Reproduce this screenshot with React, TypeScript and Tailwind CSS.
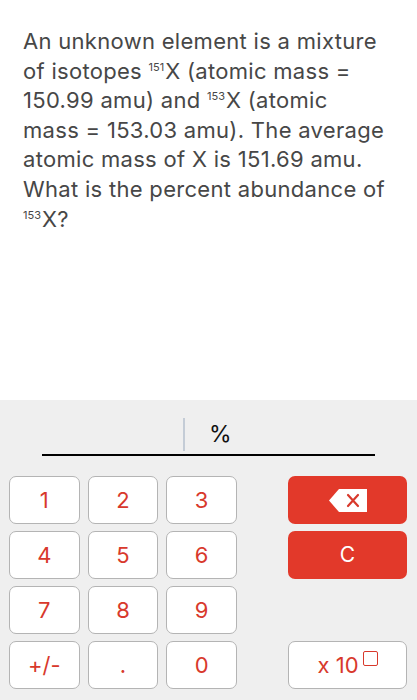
import React from 'react';

const Key = ({ label, className = '' }: { label: React.ReactNode; className?: string }) => (
  <div
    className={`flex h-[48px] items-center justify-center rounded-[7px] border-[1.5px] border-[#b4b4b4] bg-white text-[22px] text-[#d8392c] ${className}`}
  >
    {label}
  </div>
);

const Iso = ({ n }: { n: string }) => (
  <span className="relative top-[-8px] mr-[1px] text-[11px] leading-none tracking-normal">{n}</span>
);

export default function App() {
  return (
    <div className="flex h-[700px] w-[417px] flex-col bg-white" style={{ fontFamily: 'Inter, "Noto Sans", sans-serif' }}>
      {/* Question */}
      <div className="h-[400px] px-[23px] pt-[27px]">
        <p className="whitespace-nowrap text-[22px] leading-[29.6px] tracking-[0.3px] text-[#474747]">
          An unknown element is a mixture
          <br />
          of isotopes <Iso n="151" />X (atomic mass =
          <br />
          150.99 amu) and <Iso n="153" />X (atomic
          <br />
          mass = 153.03 amu). The average
          <br />
          atomic mass of X is 151.69 amu.
          <br />
          What is the percent abundance of
          <br />
          <Iso n="153" />X?
        </p>
      </div>

      {/* Answer pad */}
      <div className="flex flex-1 flex-col bg-[#efefef]">
        <div className="mx-[42px] mt-[14px] flex h-[42px] items-center border-b-2 border-black">
          <div className="ml-[141px] h-[33px] w-[2px] bg-[#c4ccd6]" />
          <span className="ml-[24px] text-[23px] text-[#111]">%</span>
        </div>

        <div className="mt-[20px] flex gap-[51px] pl-[9px]">
          <div className="grid w-[228px] grid-cols-3 gap-x-[8px] gap-y-[7px]">
            {['1', '2', '3', '4', '5', '6', '7', '8', '9', '+/-', '.', '0'].map((k) => (
              <Key key={k} label={k} />
            ))}
          </div>
          <div className="flex w-[119px] flex-col gap-[7px]">
            <div className="flex h-[48px] items-center justify-center rounded-[7px] bg-[#e2392a]">
              <svg width="40" height="25" viewBox="0 0 40 25">
                <path d="M1 12.5 L11 1 H39 V24 H11 Z" fill="white" />
                <path d="M20 7 L30 18 M30 7 L20 18" stroke="#d8392c" strokeWidth="2.2" strokeLinecap="round" />
              </svg>
            </div>
            <div className="flex h-[48px] items-center justify-center rounded-[7px] bg-[#e2392a] text-[21px] text-white">
              C
            </div>
            <div className="h-[48px]" />
            <Key
              label={
                <span className="flex items-start">
                  x 10
                  <span className="ml-[4px] mt-[2px] inline-block h-[15px] w-[15px] rounded-[2px] border-[1.5px] border-[#d8392c]" />
                </span>
              }
            />
          </div>
        </div>
      </div>
    </div>
  );
}
